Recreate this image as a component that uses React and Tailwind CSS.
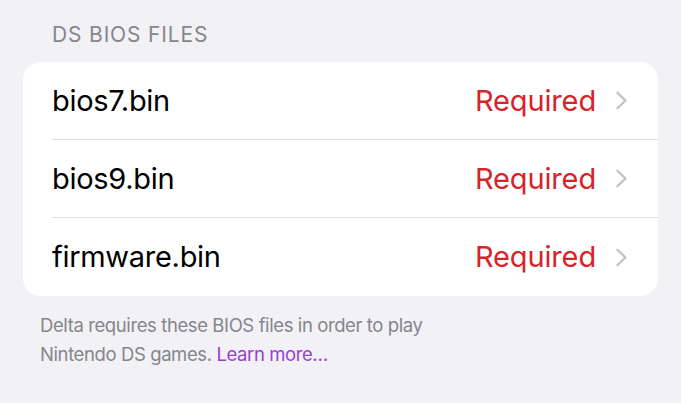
import React from 'react';

const files = ['bios7.bin', 'bios9.bin', 'firmware.bin'];

const Chevron = () => (
    <svg width="13" height="19" viewBox="0 0 13 19" fill="none" className="shrink-0">
        <path d="M2.5 1.8 L10.5 9.5 L2.5 17.2" stroke="#c4c4c8" strokeWidth="2.4" strokeLinecap="round" strokeLinejoin="round" />
    </svg>
);

const App = () => {
    return (
        <div className="min-h-screen bg-[#f2f1f6] font-['Inter',sans-serif] px-[23px] pb-8">
            {/* Section header */}
            <div className="pt-[22px] mb-[14px] pl-[29px] text-[21px] leading-[26px] text-[#86858b] tracking-[0.04em]">
                DS BIOS FILES
            </div>

            {/* File list */}
            <div className="bg-white rounded-[18px] overflow-hidden">
                {files.map((f, i) => (
                    <div key={f} className="pl-[29px] h-[78px] flex">
                        <div className={`flex-1 flex items-center pr-[30px] ${i < files.length - 1 ? 'border-b border-[#dedde2]' : ''}`}>
                            <span className="flex-1 text-[29px] text-black tracking-[-0.01em]">{f}</span>
                            <span className="text-[29px] text-[#d7232a] tracking-[-0.005em] mr-[19px]">Required</span>
                            <Chevron />
                        </div>
                    </div>
                ))}
            </div>

            {/* Footer note */}
            <p className="mt-[15px] pl-[17px] pr-[40px] text-[18.5px] leading-[29px] tracking-[-0.4px] text-[#86858b]">
                Delta requires these BIOS files in order to play
                <br />
                Nintendo DS games. <span className="text-[#9a3dd4]">Learn more…</span>
            </p>
        </div>
    );
};

export default App;
